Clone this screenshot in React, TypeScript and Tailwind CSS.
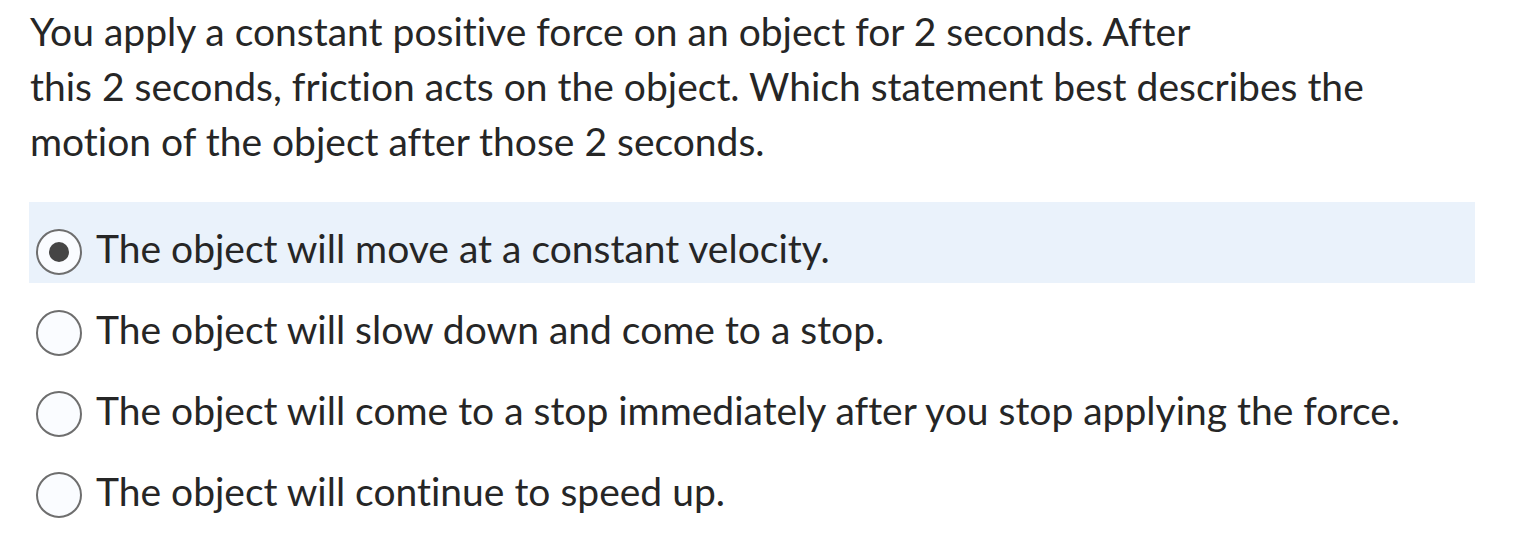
import React from "react";

const options = [
  "The object will move at a constant velocity.",
  "The object will slow down and come to a stop.",
  "The object will come to a stop immediately after you stop applying the force.",
  "The object will continue to speed up.",
];

export default function App() {
  const selected = 0;

  return (
    <div className="min-h-[540px] w-[1516px] bg-white text-[#262626] font-['Lato','Noto_Sans',sans-serif] [font-variant-ligatures:none]">
      {/* Question */}
      <div className="pl-[30px] pt-[4px] text-[39px] leading-[55px]">
        <p>
          You apply a constant positive force on an object for 2 seconds. After
          <br />
          this 2 seconds, friction acts on the object. Which statement best describes the
          <br />
          motion of the object after those 2 seconds.
        </p>
      </div>

      {/* Answers */}
      <div className="mt-[33px] ml-[29px] w-[1446px]">
        {options.map((text, i) => {
          const isSelected = i === selected;
          return (
            <label
              key={i}
              className={`flex h-[81px] items-center gap-[14px] pl-[7px] pt-[22px] pb-[4px] text-[39px] leading-[55px] ${
                isSelected ? "bg-[#eaf2fb]" : ""
              }`}
            >
              <span className="flex h-[46px] w-[46px] shrink-0 items-center justify-center rounded-full border-2 border-[#6e6e6e] bg-[#fafcff]">
                {isSelected && <span className="h-[20px] w-[20px] rounded-full bg-[#454545]" />}
              </span>
              <span className="-mt-[6px]">{text}</span>
            </label>
          );
        })}
      </div>
    </div>
  );
}
